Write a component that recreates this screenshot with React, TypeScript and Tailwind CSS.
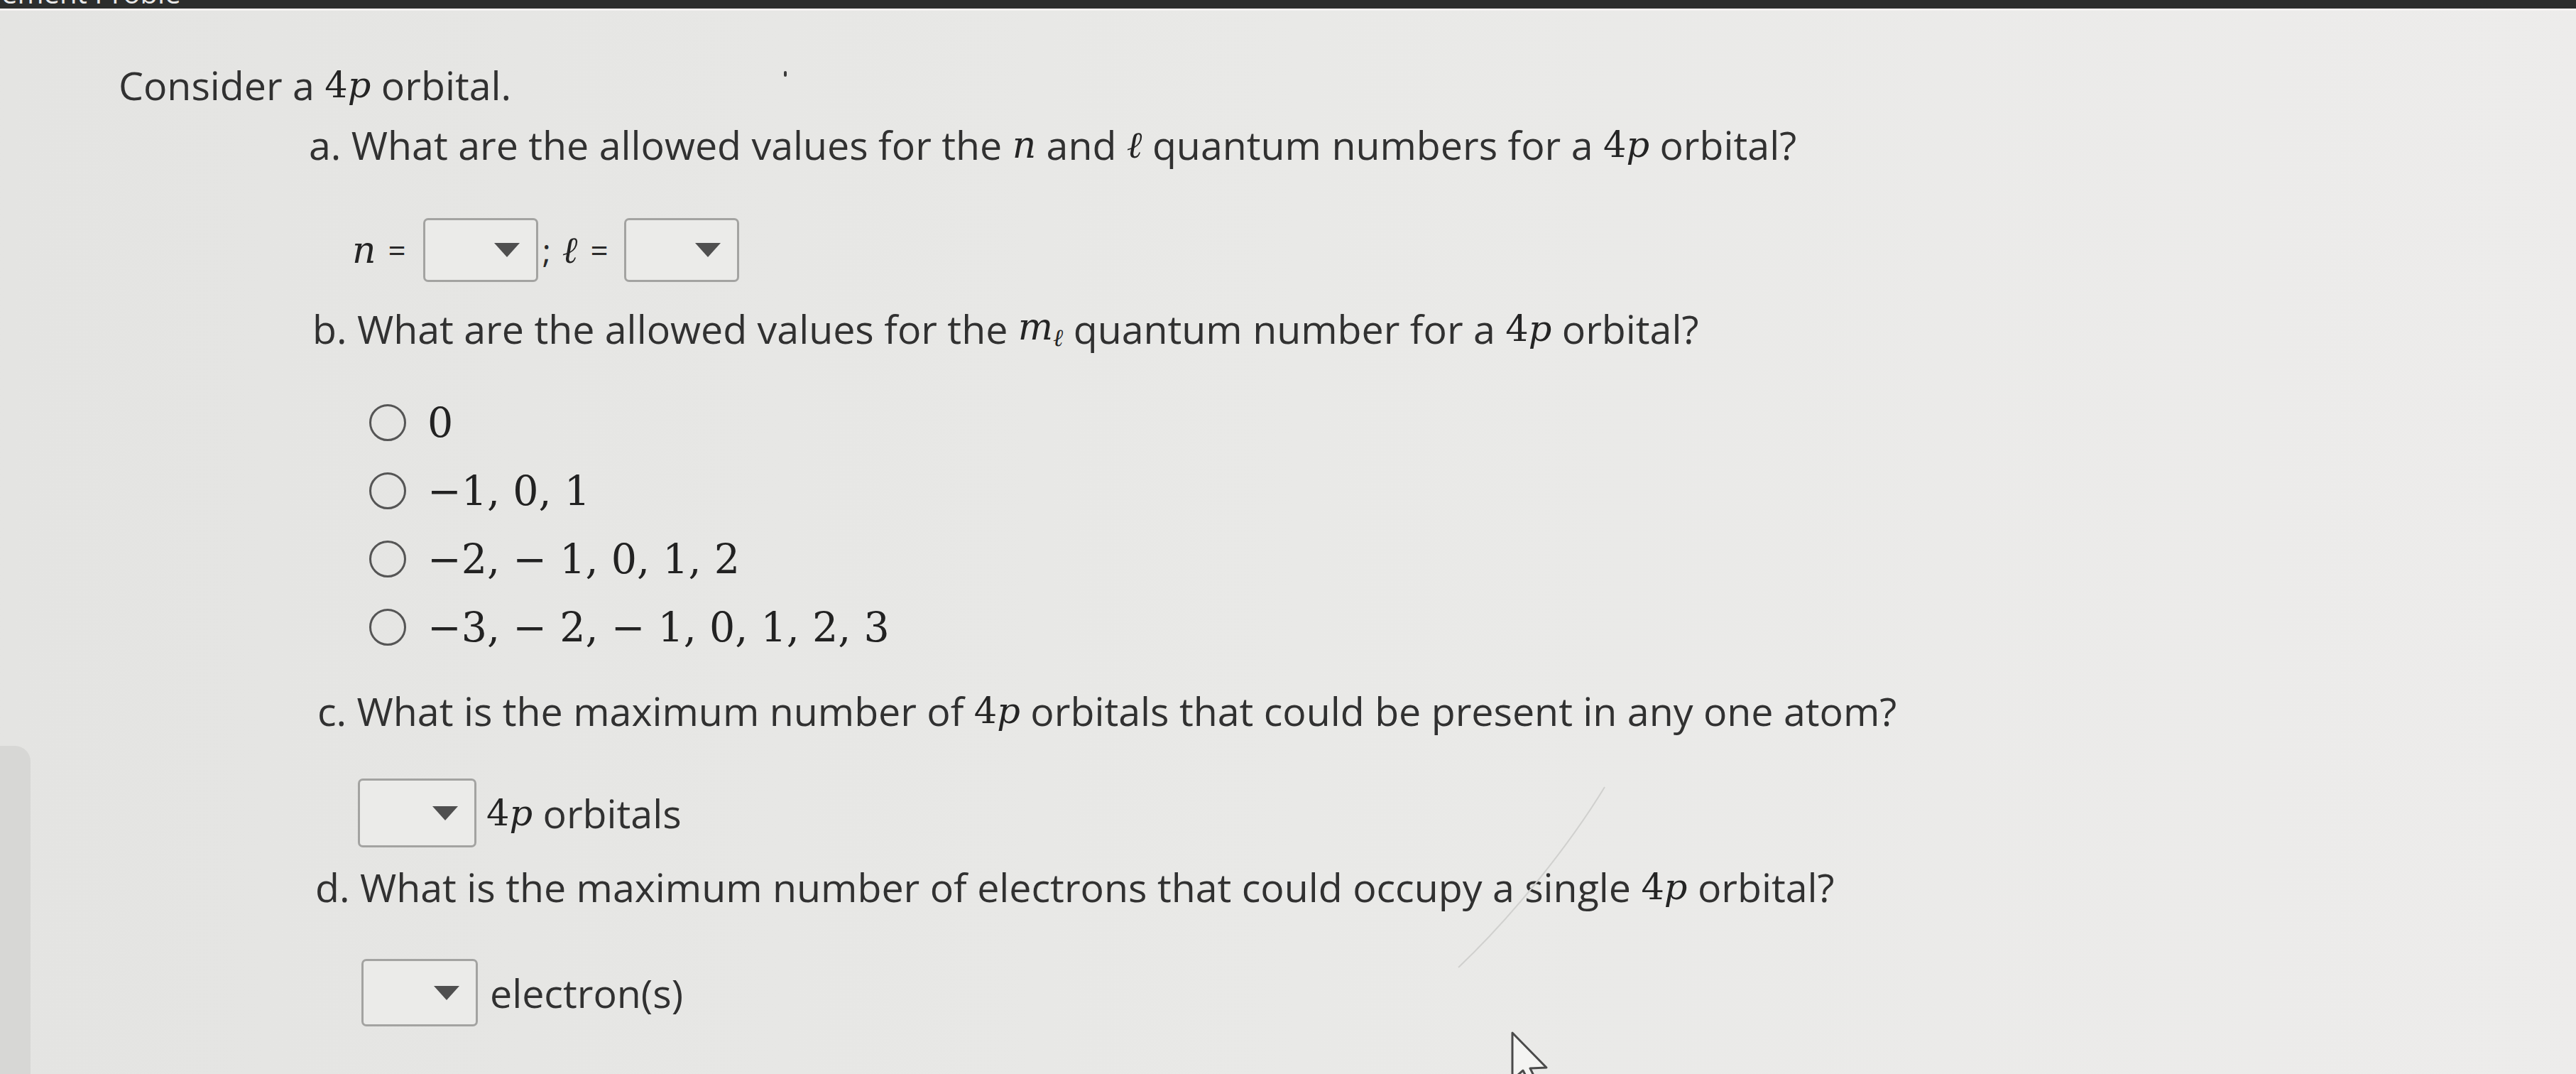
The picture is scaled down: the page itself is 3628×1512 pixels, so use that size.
import React from "react";

const sans = "font-['Open_Sans','Noto_Sans',sans-serif]";
const serif = "font-['DejaVu_Serif','Liberation_Serif',serif]";

// inline math bits (MathJax-ish look)
function FourP() {
  return (
    <span className={`${serif} text-[#242424] text-[51px]`}>
      4<i>p</i>
    </span>
  );
}

function Mi({ children }: { children: React.ReactNode }) {
  return <i className={`${serif} text-[#242424] text-[52px]`}>{children}</i>;
}

function Select({ w, h }: { w: string; h: string }) {
  return (
    <div
      className={`${w} ${h} shrink-0 rounded-[7px] border-[3px] border-[#a3a3a1] bg-[#ebebe9] flex items-center justify-end pr-[22px]`}
    >
      <svg width="38" height="22" viewBox="0 0 38 22">
        <path d="M1 1 L37 1 L19 21 Z" fill="#4f4f4f" />
      </svg>
    </div>
  );
}

function Radio({ label }: { label: string }) {
  return (
    <div className="h-[60px] flex items-center pl-[520px]">
      <span className="w-[52px] h-[52px] rounded-full border-[3px] border-[#555555] shrink-0" />
      <span className={`${serif} text-[#222222] text-[57px] leading-none ml-[30px]`}>{label}</span>
    </div>
  );
}

export default function App() {
  const line = `${sans} text-[55.5px] text-[#313131] leading-[60px] h-[60px] whitespace-nowrap flex items-center`;

  const options = ["0", "−1, 0, 1", "−2, − 1, 0, 1, 2", "−3, − 2, − 1, 0, 1, 2, 3"];

  return (
    <div className="relative w-[3628px] h-[1512px] overflow-hidden bg-gradient-to-r from-[#e4e4e2] via-[#e9e9e7] to-[#edeceb]">
      {/* browser chrome strip at the top */}
      <div className="h-[12px] bg-[#2c2e2d] overflow-hidden">
        <span className={`${sans} block text-[#e8e8e8] text-[40px] leading-none -mt-[30px] ml-[2px]`}>
          ement Proble
        </span>
      </div>
      <div className="h-[3px] bg-[#f4f2f1]" />

      <div className="flex flex-col">
        <div className={`${line} mt-[75px] pl-[167px]`}>
          Consider a&nbsp;<FourP />&nbsp;orbital.
        </div>

        {/* a */}
        <div className={`${line} mt-[24px] pl-[435px]`}>
          a. What are the allowed values for the&nbsp;<Mi>n</Mi>&nbsp;and&nbsp;<Mi>ℓ</Mi>&nbsp;quantum numbers for a&nbsp;
          <FourP />&nbsp;orbital?
        </div>
        <div className="mt-[73px] h-[90px] flex items-center pl-[496px] text-[#2a2a2a]">
          <Mi>n</Mi>
          <span className={`${sans} text-[44px] ml-[17px] mr-[24px]`}>=</span>
          <Select w="w-[162px]" h="h-[90px]" />
          <span className={`${sans} text-[46px] ml-[6px] mr-[16px]`}>;</span>
          <Mi>ℓ</Mi>
          <span className={`${sans} text-[44px] ml-[18px] mr-[22px]`}>=</span>
          <Select w="w-[162px]" h="h-[90px]" />
        </div>

        {/* b */}
        <div className={`${line} mt-[36px] pl-[440px]`}>
          b. What are the allowed values for the&nbsp;
          <span className="inline-flex items-baseline">
            <Mi>m</Mi>
            <i className={`${serif} text-[34px] text-[#242424] relative top-[9px]`}>ℓ</i>
          </span>
          &nbsp;quantum number for a&nbsp;<FourP />&nbsp;orbital?
        </div>
        <div className="mt-[72px] flex flex-col gap-[36px]">
          {options.map((o) => (
            <Radio key={o} label={o} />
          ))}
        </div>

        {/* c */}
        <div className={`${line} mt-[58px] pl-[447px]`}>
          c. What is the maximum number of&nbsp;<FourP />&nbsp;orbitals that could be present in any one atom?
        </div>
        <div className="mt-[65px] h-[97px] flex items-center pl-[504px]">
          <Select w="w-[167px]" h="h-[97px]" />
          <span className={`${line} ml-[14px]`}>
            <FourP />&nbsp;orbitals
          </span>
        </div>

        {/* d */}
        <div className={`${line} mt-[26px] pl-[444px]`}>
          d. What is the maximum number of electrons that could occupy a single&nbsp;<FourP />&nbsp;orbital?
        </div>
        <div className="mt-[71px] h-[95px] flex items-center pl-[509px]">
          <Select w="w-[164px]" h="h-[95px]" />
          <span className={`${line} ml-[17px]`}>electron(s)</span>
        </div>
      </div>

      {/* left edge scrollbar */}
      <div className="absolute left-0 top-[1050px] bottom-0 w-[43px] rounded-tr-[22px] bg-[#d7d7d5]" />

      {/* stray speck on the screen */}
      <div className="absolute left-[1104px] top-[100px] w-[4px] h-[8px] rounded-full bg-[#3a3a3a]" />

      {/* faint scratch */}
      <svg className="absolute left-[2040px] top-[1100px]" width="240" height="280" viewBox="0 0 240 280">
        <path d="M220 8 C170 90 90 190 14 262" stroke="#d0d0ce" strokeWidth="2" fill="none" />
      </svg>

      {/* mouse pointer, cut off at the bottom */}
      <svg className="absolute left-[2126px] top-[1450px]" width="76" height="76" viewBox="0 0 76 76">
        <path
          d="M4 4 L4 70 L19 57 L29 76 L38 72 L29 54 L52 53 Z"
          fill="#f4f4f2"
          stroke="#4a4a4a"
          strokeWidth="3"
          strokeLinejoin="round"
        />
      </svg>
    </div>
  );
}
